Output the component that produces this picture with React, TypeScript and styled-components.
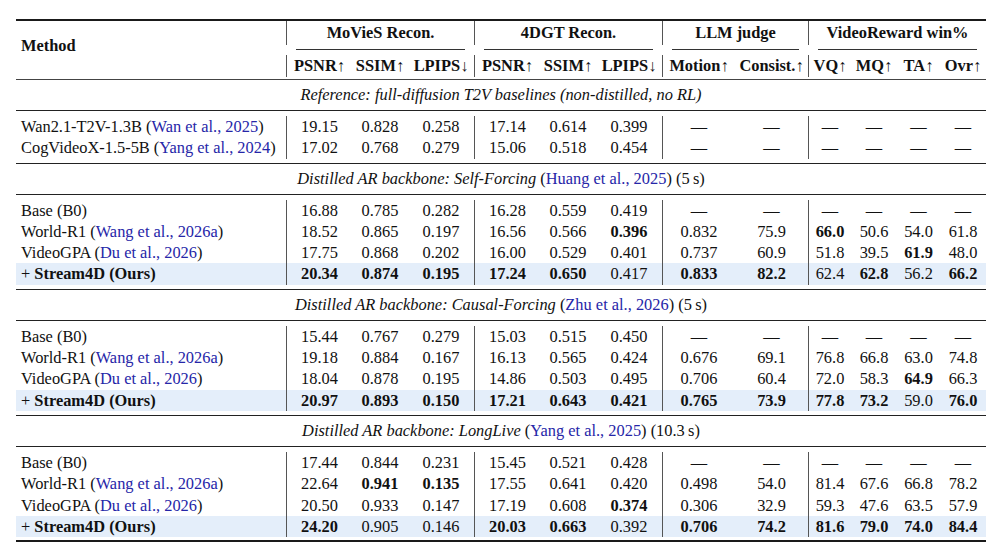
import React from "react";
import styled, { createGlobalStyle } from "styled-components";

const Global = createGlobalStyle`
  html, body { margin: 0; padding: 0; background: #ffffff; }
  body {
    font-family: "Liberation Serif", "Times New Roman", serif;
    color: #111111;
  }
`;

const Page = styled.div`
  padding: 19px 0 0 16px;
`;

const Table = styled.table`
  width: 970px;
  table-layout: fixed;
  border-collapse: separate;
  border-spacing: 0;
  font-size: 16.4px;
`;

const BAR = "1px solid #555555";

const RuleCell = styled.td<{ $top: number; $bottom: number }>`
  padding: ${(p) => p.$top}px 0 ${(p) => p.$bottom}px 0;
  font-size: 0;
  line-height: 0;
`;

const Line = styled.div<{ $thick: number; $color: string; $trim?: boolean }>`
  height: ${(p) => p.$thick}px;
  background: ${(p) => p.$color};
  margin: ${(p) => (p.$trim ? "0 9px 0 10px" : "0")};
`;

const HeadCell = styled.th<{ $bar?: boolean; $h: number }>`
  padding: 0;
  height: ${(p) => p.$h}px;
  line-height: ${(p) => p.$h}px;
  font-weight: 700;
  text-align: center;
  white-space: nowrap;
  vertical-align: middle;
  border-left: ${(p) => (p.$bar ? BAR : "none")};
`;

const MethodHead = styled.th`
  padding: 0 0 6px 5px;
  font-weight: 700;
  text-align: left;
  vertical-align: middle;
  white-space: nowrap;
`;

const Arrow = styled.span`
  font-weight: 400;
`;

const SectionCell = styled.td`
  padding: 0;
  height: 30px;
  line-height: 30px;
  text-align: center;
  white-space: nowrap;
`;

const Ital = styled.i`
  font-style: italic;
`;

const Cite = styled.span`
  color: #2626a8;
`;

const DataRow = styled.tr<{ $hl?: boolean }>`
  background: ${(p) => (p.$hl ? "#e4eefa" : "transparent")};
`;

const NameCell = styled.td`
  padding: 0 0 0 5px;
  height: 21.3px;
  line-height: 21.3px;
  text-align: left;
  white-space: nowrap;
`;

const ValCell = styled.td<{ $bar?: boolean; $bold?: boolean }>`
  padding: 0;
  height: 21.3px;
  line-height: 21.3px;
  text-align: center;
  white-space: nowrap;
  font-weight: ${(p) => (p.$bold ? 700 : 400)};
  border-left: ${(p) => (p.$bar ? BAR : "none")};
`;

const Bold = styled.b`
  font-weight: 700;
`;

const Plus = styled.span`
  font-weight: 400;
`;

const COLS = [270, 66, 56, 66, 66, 56, 66, 73, 73, 43, 46, 43, 46];
const BAR_AT = new Set([0, 3, 6, 8]);
const NCOLS = COLS.length;

type Row = { name: React.ReactNode; vals: string[]; ours?: boolean };
type Block = { title: React.ReactNode; rows: Row[] };

const D = "—";
const dashes = [D, D, D, D, D, D];

const ours: React.ReactNode = (
  <>
    <Plus>+ </Plus>
    <Bold>Stream4D (Ours)</Bold>
  </>
);

const base = "Base (B0)";
const world = (
  <>
    World-R1 (<Cite>Wang et al., 2026a</Cite>)
  </>
);
const vgpa = (
  <>
    VideoGPA (<Cite>Du et al., 2026</Cite>)
  </>
);

const blocks: Block[] = [
  {
    title: <Ital>Reference: full-diffusion T2V baselines (non-distilled, no RL)</Ital>,
    rows: [
      {
        name: (
          <>
            Wan2.1-T2V-1.3B (<Cite>Wan et al., 2025</Cite>)
          </>
        ),
        vals: ["19.15", "0.828", "0.258", "17.14", "0.614", "0.399", ...dashes],
      },
      {
        name: (
          <>
            CogVideoX-1.5-5B (<Cite>Yang et al., 2024</Cite>)
          </>
        ),
        vals: ["17.02", "0.768", "0.279", "15.06", "0.518", "0.454", ...dashes],
      },
    ],
  },
  {
    title: (
      <>
        <Ital>Distilled AR backbone: Self-Forcing</Ital> (<Cite>Huang et al., 2025</Cite>) (5&#8201;s)
      </>
    ),
    rows: [
      { name: base, vals: ["16.88", "0.785", "0.282", "16.28", "0.559", "0.419", ...dashes] },
      {
        name: world,
        vals: ["18.52", "0.865", "0.197", "16.56", "0.566", "*0.396", "0.832", "75.9", "*66.0", "50.6", "54.0", "61.8"],
      },
      {
        name: vgpa,
        vals: ["17.75", "0.868", "0.202", "16.00", "0.529", "0.401", "0.737", "60.9", "51.8", "39.5", "*61.9", "48.0"],
      },
      {
        name: ours,
        ours: true,
        vals: ["*20.34", "*0.874", "*0.195", "*17.24", "*0.650", "0.417", "*0.833", "*82.2", "62.4", "*62.8", "56.2", "*66.2"],
      },
    ],
  },
  {
    title: (
      <>
        <Ital>Distilled AR backbone: Causal-Forcing</Ital> (<Cite>Zhu et al., 2026</Cite>) (5&#8201;s)
      </>
    ),
    rows: [
      { name: base, vals: ["15.44", "0.767", "0.279", "15.03", "0.515", "0.450", ...dashes] },
      {
        name: world,
        vals: ["19.18", "0.884", "0.167", "16.13", "0.565", "0.424", "0.676", "69.1", "76.8", "66.8", "63.0", "74.8"],
      },
      {
        name: vgpa,
        vals: ["18.04", "0.878", "0.195", "14.86", "0.503", "0.495", "0.706", "60.4", "72.0", "58.3", "*64.9", "66.3"],
      },
      {
        name: ours,
        ours: true,
        vals: ["*20.97", "*0.893", "*0.150", "*17.21", "*0.643", "*0.421", "*0.765", "*73.9", "*77.8", "*73.2", "59.0", "*76.0"],
      },
    ],
  },
  {
    title: (
      <>
        <Ital>Distilled AR backbone: LongLive</Ital> (<Cite>Yang et al., 2025</Cite>) (10.3&#8201;s)
      </>
    ),
    rows: [
      { name: base, vals: ["17.44", "0.844", "0.231", "15.45", "0.521", "0.428", ...dashes] },
      {
        name: world,
        vals: ["22.64", "*0.941", "*0.135", "17.55", "0.641", "0.420", "0.498", "54.0", "81.4", "67.6", "66.8", "78.2"],
      },
      {
        name: vgpa,
        vals: ["20.50", "0.933", "0.147", "17.19", "0.608", "*0.374", "0.306", "32.9", "59.3", "47.6", "63.5", "57.9"],
      },
      {
        name: ours,
        ours: true,
        vals: ["*24.20", "0.905", "0.146", "*20.03", "*0.663", "0.392", "*0.706", "*74.2", "*81.6", "*79.0", "*74.0", "*84.4"],
      },
    ],
  },
];

const groups = [
  { label: "MoVieS Recon.", span: 3 },
  { label: "4DGT Recon.", span: 3 },
  { label: "LLM judge", span: 2 },
  { label: "VideoReward win%", span: 4 },
];

const subHeads: [string, string][] = [
  ["PSNR", "↑"],
  ["SSIM", "↑"],
  ["LPIPS", "↓"],
  ["PSNR", "↑"],
  ["SSIM", "↑"],
  ["LPIPS", "↓"],
  ["Motion", "↑"],
  ["Consist.", "↑"],
  ["VQ", "↑"],
  ["MQ", "↑"],
  ["TA", "↑"],
  ["Ovr", "↑"],
];

const Rule = ({
  top,
  thick,
  bottom,
  color = "#222222",
}: {
  top: number;
  thick: number;
  bottom: number;
  color?: string;
}) => (
  <tr>
    <RuleCell colSpan={NCOLS} $top={top} $bottom={bottom}>
      <Line $thick={thick} $color={color} />
    </RuleCell>
  </tr>
);

export default function App() {
  return (
    <>
      <Global />
      <Page>
        <Table>
          <colgroup>
            {COLS.map((w, i) => (
              <col key={i} style={{ width: w }} />
            ))}
          </colgroup>
          <thead>
            <Rule top={0} thick={2} bottom={0} color="#1a1a1a" />
            <tr>
              <MethodHead rowSpan={3}>Method</MethodHead>
              {groups.map((g) => (
                <HeadCell key={g.label} colSpan={g.span} $bar $h={24}>
                  {g.label}
                </HeadCell>
              ))}
            </tr>
            <tr>
              {groups.map((g) => (
                <RuleCell key={g.label} colSpan={g.span} $top={4} $bottom={5}>
                  <Line $thick={1} $color="#333333" $trim />
                </RuleCell>
              ))}
            </tr>
            <tr>
              {subHeads.map(([t, a], i) => (
                <HeadCell key={i} $bar={BAR_AT.has(i)} $h={22}>
                  {t}
                  <Arrow>{a}</Arrow>
                </HeadCell>
              ))}
            </tr>
            <Rule top={2} thick={1} bottom={0} color="#444444" />
          </thead>
          {blocks.map((b, bi) => (
            <tbody key={bi}>
              <tr>
                <SectionCell colSpan={NCOLS}>{b.title}</SectionCell>
              </tr>
              <Rule top={0} thick={1} bottom={5} />
              {b.rows.map((r, ri) => (
                <DataRow key={ri} $hl={r.ours}>
                  <NameCell>{r.name}</NameCell>
                  {r.vals.map((v, vi) => {
                    const bold = v.startsWith("*");
                    return (
                      <ValCell key={vi} $bar={BAR_AT.has(vi)} $bold={bold}>
                        {bold ? v.slice(1) : v}
                      </ValCell>
                    );
                  })}
                </DataRow>
              ))}
              {bi < blocks.length - 1 ? (
                <Rule top={4} thick={1} bottom={0} />
              ) : (
                <Rule top={3} thick={2} bottom={0} color="#1a1a1a" />
              )}
            </tbody>
          ))}
        </Table>
      </Page>
    </>
  );
}
